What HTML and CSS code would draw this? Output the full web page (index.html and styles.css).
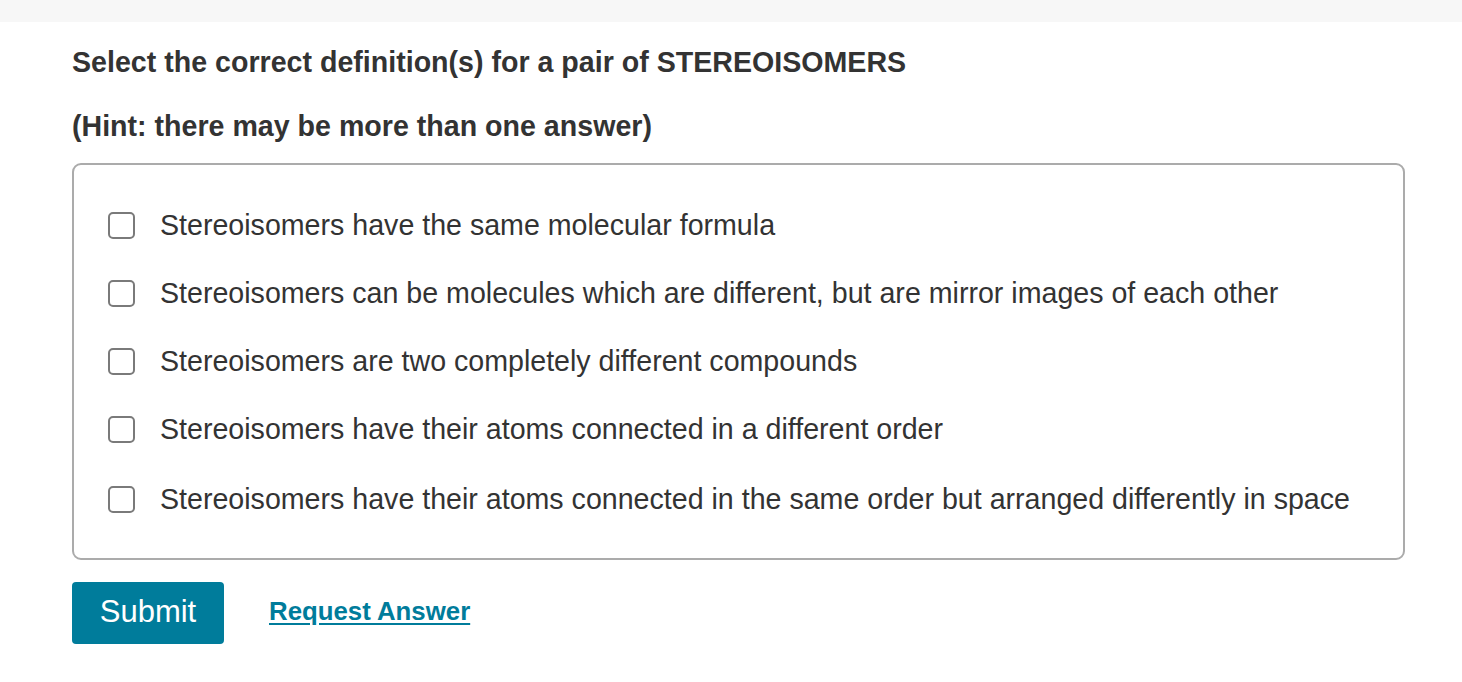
FILE: index.html
```html
<!DOCTYPE html>
<html>
<head>
<meta charset="utf-8">
<link rel="stylesheet" href="styles.css">
</head>
<body>
<div class="topbar"></div>
<main class="content">
  <p class="prompt">Select the correct definition(s) for a pair of STEREOISOMERS</p>
  <p class="prompt hint">(Hint: there may be more than one answer)</p>
  <div class="choices">
    <label class="choice"><span class="box"></span><span class="label">Stereoisomers have the same molecular formula</span></label>
    <label class="choice"><span class="box"></span><span class="label">Stereoisomers can be molecules which are different, but are mirror images of each other</span></label>
    <label class="choice"><span class="box"></span><span class="label">Stereoisomers are two completely different compounds</span></label>
    <label class="choice"><span class="box"></span><span class="label">Stereoisomers have their atoms connected in a different order</span></label>
    <label class="choice"><span class="box"></span><span class="label">Stereoisomers have their atoms connected in the same order but arranged differently in space</span></label>
  </div>
  <div class="actions">
    <button class="submit">Submit</button>
    <a class="request" href="#">Request Answer</a>
  </div>
</main>
</body>
</html>
```

FILE: styles.css
```css
html, body {
  margin: 0;
  padding: 0;
  background: #fff;
}
body {
  font-family: "Liberation Sans", Arial, Helvetica, sans-serif;
  color: #333;
}
.topbar {
  height: 22px;
  background: #f7f7f7;
}
.content {
  width: 1333px;
  padding: 0 0 0 72px;
}
.prompt {
  margin: 0;
  font-weight: bold;
  font-size: 28.6px;
  line-height: 30px;
}
.prompt:first-child {
  margin-top: 25px;
}
.hint {
  margin-top: 34px;
}
.choices {
  margin-top: 22px;
  border: 2px solid #ababab;
  border-radius: 9px;
  padding: 45px 34px 44px;
  display: flex;
  flex-direction: column;
  gap: 38px;
}
.choice {
  display: flex;
  align-items: center;
  gap: 25px;
  font-size: 28.6px;
  line-height: 30px;
}
.choice:last-child {
  margin-top: 2px;
}
.box {
  width: 23px;
  height: 23px;
  border: 2px solid #7a7a7a;
  border-radius: 5px;
  flex: none;
}
.actions {
  margin-top: 22px;
  display: flex;
  align-items: center;
  gap: 45px;
}
.submit {
  width: 152px;
  height: 62px;
  background: #007c9b;
  color: #fff;
  border: none;
  border-radius: 4px;
  font-family: "Liberation Sans", Arial, sans-serif;
  font-size: 31px;
  padding: 0 0 3px;
}
.request {
  color: #007c9b;
  font-weight: bold;
  font-size: 25.8px;
  text-decoration: underline;
  text-underline-offset: 3px;
  padding-bottom: 4px;
}
```
